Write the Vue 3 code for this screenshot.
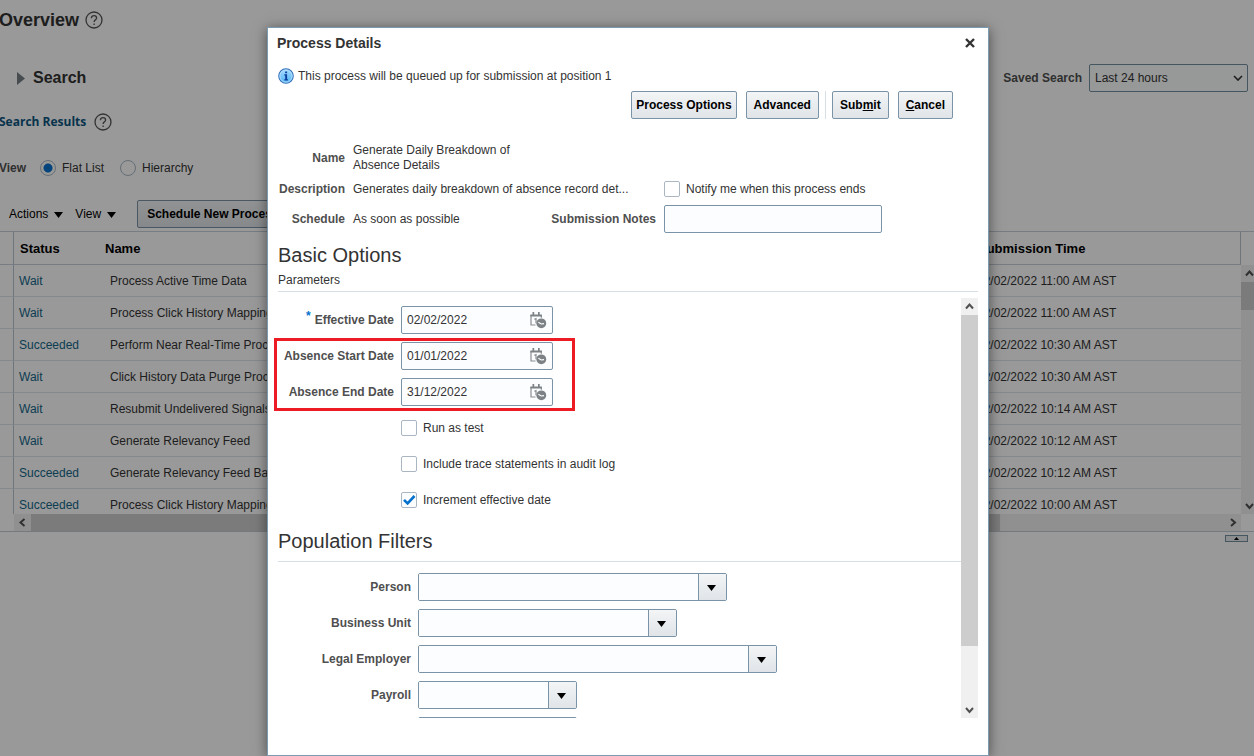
<script setup>
import { ref } from 'vue'

const listMode = ref('flat')
const savedSearch = ref('Last 24 hours')

const rows = [
  { status: 'Wait', name: 'Process Active Time Data', time: '02/02/2022 11:00 AM AST' },
  { status: 'Wait', name: 'Process Click History Mapping', time: '02/02/2022 11:00 AM AST' },
  { status: 'Succeeded', name: 'Perform Near Real-Time Processing', time: '02/02/2022 10:30 AM AST' },
  { status: 'Wait', name: 'Click History Data Purge Process', time: '02/02/2022 10:30 AM AST' },
  { status: 'Wait', name: 'Resubmit Undelivered Signals', time: '02/02/2022 10:14 AM AST' },
  { status: 'Wait', name: 'Generate Relevancy Feed', time: '02/02/2022 10:12 AM AST' },
  { status: 'Succeeded', name: 'Generate Relevancy Feed Batch', time: '02/02/2022 10:12 AM AST' },
  { status: 'Succeeded', name: 'Process Click History Mapping', time: '02/02/2022 10:00 AM AST' },
]

const effectiveDate = ref({ id: 'effective', label: 'Effective Date', value: '02/02/2022' })
const absenceDates = ref([
  { id: 'start', label: 'Absence Start Date', value: '01/01/2022' },
  { id: 'end', label: 'Absence End Date', value: '31/12/2022' },
])
const options = ref([
  { id: 'test', label: 'Run as test', on: false },
  { id: 'trace', label: 'Include trace statements in audit log', on: false },
  { id: 'increment', label: 'Increment effective date', on: true },
])
const filters = ref([
  { id: 'person', label: 'Person', size: 'm', value: '' },
  { id: 'unit', label: 'Business Unit', size: 's', value: '' },
  { id: 'employer', label: 'Legal Employer', size: 'l', value: '' },
  { id: 'payroll', label: 'Payroll', size: 'xs', value: '' },
  { id: 'more', label: '', size: 'xs', value: '' },
])
const notify = ref(false)
const notes = ref('')
</script>

<template>
  <div class="page">
    <main class="overview">
      <header class="page-head">
        <h1>Overview</h1>
        <button class="help" aria-label="Help">
          <svg viewBox="0 0 18 18"><circle cx="9" cy="9" r="8" /><path d="M6.4 7.2C6.4 5.6 7.5 4.6 9 4.6s2.6.9 2.6 2.3c0 1.9-2.5 2-2.5 4.2M9.1 12.6v1.3" /></svg>
        </button>
      </header>

      <div class="search-bar">
        <button class="disclosure" aria-label="Expand Search">
          <svg viewBox="0 0 8 13"><path d="M0 0l8 6.5L0 13z" /></svg>
        </button>
        <h2>Search</h2>
        <label class="saved-label" for="saved">Saved Search</label>
        <span class="select-box">
          <select id="saved" v-model="savedSearch"><option>Last 24 hours</option></select>
          <svg viewBox="0 0 10 6"><path d="M1 1l4 4 4-4" /></svg>
        </span>
      </div>

      <div class="results-head">
        <h3>Search Results</h3>
        <button class="help" aria-label="Help on results">
          <svg viewBox="0 0 18 18"><circle cx="9" cy="9" r="8" /><path d="M6.4 7.2C6.4 5.6 7.5 4.6 9 4.6s2.6.9 2.6 2.3c0 1.9-2.5 2-2.5 4.2M9.1 12.6v1.3" /></svg>
        </button>
      </div>

      <div class="view-row">
        <span class="view-title">View</span>
        <label><input v-model="listMode" type="radio" name="mode" value="flat" />Flat List</label>
        <label><input v-model="listMode" type="radio" name="mode" value="tree" />Hierarchy</label>
      </div>

      <div class="toolbar">
        <button class="menu">Actions<svg viewBox="0 0 9 6"><path d="M0 0h9L4.500 6z" /></svg></button>
        <button class="menu">View<svg viewBox="0 0 9 6"><path d="M0 0h9L4.500 6z" /></svg></button>
        <button class="btn new-process">Schedule New Process</button>
      </div>

      <section class="grid-box">
        <div class="grid-main">
          <div class="grid-clip">
            <table>
              <colgroup><col class="c-gutter" /><col class="c-status" /><col /><col class="c-time" /></colgroup>
              <thead>
                <tr><th></th><th>Status</th><th>Name</th><th>Submission Time</th></tr>
              </thead>
              <tbody>
                <tr v-for="(r, i) in rows" :key="i">
                  <td></td>
                  <td><a href="#">{{ r.status }}</a></td>
                  <td>{{ r.name }}</td>
                  <td>{{ r.time }}</td>
                </tr>
              </tbody>
            </table>
          </div>
          <div class="hbar">
            <svg class="arrow" viewBox="0 0 17 17"><path d="M10.500 5l-4 3.500 4 3.500" /></svg>
            <span class="h-thumb"></span>
            <svg class="arrow" viewBox="0 0 17 17"><path d="M7 5l4 3.500-4 3.500" /></svg>
          </div>
        </div>
        <div class="vbar grid-vbar">
          <svg class="arrow" viewBox="0 0 17 17"><path d="M5 10.500l3.500-4 3.500 4" /></svg>
          <span class="v-thumb"></span>
          <svg class="arrow" viewBox="0 0 17 17"><path d="M5 7l3.500 4L12 7" /></svg>
        </div>
      </section>
      <div class="splitter">
        <button aria-label="Collapse pane"><svg viewBox="0 0 5 3"><path d="M0 3h5L2.500 0z" /></svg></button>
      </div>
    </main>

    <div class="veil">
      <section class="dialog" role="dialog" aria-label="Process Details">
        <header class="dialog-head">
          <h2>Process Details</h2>
          <button class="close" aria-label="Close"><svg viewBox="0 0 10 10"><path d="M1 1l8 8M9 1L1 9" /></svg></button>
        </header>

        <p class="info">
          <svg viewBox="0 0 16 16">
            <defs>
              <linearGradient id="ball" x1="0" y1="0" x2="0" y2="1"><stop offset="0" stop-color="#a8dcff" /><stop offset="1" stop-color="#4fb4f5" /></linearGradient>
            </defs>
            <circle cx="8" cy="8" r="7.200" fill="url(#ball)" stroke="#2f6fb8" stroke-width="1.200" />
            <circle cx="8" cy="8" r="6.200" fill="none" stroke="#c4e6ff" stroke-width="0.800" />
            <path d="M7.200 3.500h1.900v1.800H7.200zM6.300 6.300h2.800v5h.9v1.100H6.300v-1.100h.9V7.400h-.9z" fill="#0b3f9c" />
          </svg>
          This process will be queued up for submission at position 1
        </p>

        <div class="actions">
          <button class="btn wide">Process Options</button>
          <button class="btn">Advanced</button>
          <span class="divider"></span>
          <button class="btn">Sub<u>m</u>it</button>
          <button class="btn"><u>C</u>ancel</button>
        </div>

        <div class="details">
          <span class="lab">Name</span>
          <span class="name-value">Generate Daily Breakdown of Absence Details</span>
          <span class="lab row2">Description</span>
          <span class="desc-value">Generates daily breakdown of absence record det...</span>
          <label class="check"><input v-model="notify" type="checkbox" />Notify me when this process ends</label>
          <span class="lab">Schedule</span>
          <span>As soon as possible</span>
          <label class="lab" for="notes">Submission Notes</label>
          <input id="notes" v-model="notes" class="field" type="text" />
        </div>

        <div class="basic-head">
          <h2 class="section-title">Basic Options</h2>
          <p>Parameters</p>
        </div>

        <div class="scroll-area">
          <div class="scroll-content">
            <div class="params">
              <div class="param-row">
                <label for="effective"><b class="star">*</b>{{ effectiveDate.label }}</label>
                <span class="date-field">
                  <input id="effective" v-model="effectiveDate.value" class="field" type="text" />
                  <button aria-label="Select date">
                    <svg viewBox="0 0 17 17"><path class="line" d="M5.500 13H1V3.500h10.300v2.200" /><path class="bar" d="M.4 2.500h11.500v2H.4zM2.500 0h1.700v3H2.500zM8 0h1.700v3H8z" /><path class="line" d="M4.400 7.400L6 6.600v4.600" /><circle cx="11.300" cy="11.300" r="4.900" /><path class="hand" d="M8.400 10.300l2.800 1.700 2.800-.4" /></svg>
                  </button>
                </span>
              </div>
              <div class="marked">
                <div v-for="d in absenceDates" :key="d.id" class="param-row">
                  <label :for="d.id">{{ d.label }}</label>
                  <span class="date-field">
                    <input :id="d.id" v-model="d.value" class="field" type="text" />
                    <button aria-label="Select date">
                      <svg viewBox="0 0 17 17"><path class="line" d="M5.500 13H1V3.500h10.300v2.200" /><path class="bar" d="M.4 2.500h11.500v2H.4zM2.500 0h1.700v3H2.500zM8 0h1.700v3H8z" /><path class="line" d="M4.400 7.400L6 6.600v4.600" /><circle cx="11.300" cy="11.300" r="4.900" /><path class="hand" d="M8.400 10.300l2.800 1.700 2.800-.4" /></svg>
                    </button>
                  </span>
                </div>
              </div>
              <label v-for="o in options" :key="o.id" class="check option">
                <input v-model="o.on" type="checkbox" />{{ o.label }}
              </label>
            </div>

            <h2 class="section-title population">Population Filters</h2>

            <div class="filters">
              <div v-for="f in filters" :key="f.id" class="filter-row">
                <label :for="f.id">{{ f.label }}</label>
                <span class="combo" :class="f.size">
                  <input :id="f.id" v-model="f.value" type="text" />
                  <button aria-label="Open list"><svg viewBox="0 0 9 6"><path d="M0 0h9L4.500 6z" /></svg></button>
                </span>
              </div>
            </div>
          </div>
          <div class="vbar">
            <svg class="arrow" viewBox="0 0 17 17"><path d="M5 10.500l3.500-4 3.500 4" /></svg>
            <span class="v-thumb"></span>
            <svg class="arrow" viewBox="0 0 17 17"><path d="M5 7l3.500 4L12 7" /></svg>
          </div>
        </div>
      </section>
    </div>
  </div>
</template>

<style>
body {
  margin: 0;
  background: #fff;
}
</style>

<style scoped>
*, *::after {
  box-sizing: border-box;
}
.page {
  position: relative;
  min-height: 100vh;
  overflow: hidden;
  font: 12px/16px "Liberation Sans", Arial, sans-serif;
  color: #333;
}
h1, h2, h3, p {
  margin: 0;
}
button, input, select {
  margin: 0;
  font: inherit;
  color: inherit;
}
button {
  display: inline-flex;
  align-items: center;
  justify-content: center;
  padding: 0;
  border: 0;
  background: none;
}
svg {
  display: block;
  flex: none;
}

.page-head {
  display: flex;
  align-items: center;
  gap: 6px;
  height: 40px;
}
h1 {
  margin-left: -1px;
  font-size: 18px;
  line-height: 24px;
}
.help svg {
  width: 18px;
  height: 18px;
  fill: none;
  stroke: #555;
  stroke-width: 1.3;
}
.search-bar {
  display: flex;
  align-items: center;
  height: 28px;
  margin-top: 24px;
  padding: 0 6px 0 17px;
}
.disclosure svg {
  width: 8px;
  height: 13px;
  fill: #777f86;
}
.search-bar h2 {
  margin-left: 8px;
  font-size: 16px;
}
.saved-label {
  margin-left: auto;
  margin-right: 7px;
  font-weight: bold;
  color: #4f4f4f;
}
.select-box {
  position: relative;
  width: 159px;
}
.select-box select {
  width: 100%;
  height: 28px;
  padding: 0 5px;
  appearance: none;
  border: 1px solid #758fa0;
  border-radius: 2px;
  background: #fcfdfe;
}
.select-box svg {
  position: absolute;
  top: 11px;
  right: 5px;
  width: 10px;
  height: 6px;
  fill: none;
  stroke: #333;
  stroke-width: 1.600;
}
.results-head {
  display: flex;
  align-items: center;
  gap: 8px;
  height: 20px;
  margin-top: 20px;
}
.results-head h3 {
  margin-left: -1px;
  font: bold 12px/16px "Open Sans", "Noto Sans", sans-serif;
  color: #0d567f;
}
.view-row {
  display: flex;
  align-items: center;
  height: 16px;
  margin-top: 28px;
}
.view-title {
  width: 41px;
  margin-left: -1px;
  font-weight: bold;
  color: #4f4f4f;
}
.view-row label {
  display: flex;
  align-items: center;
  gap: 6px;
  margin-right: 16px;
}
.view-row input {
  width: 16px;
  height: 16px;
  appearance: none;
  border: 1px solid #aab7c2;
  border-radius: 50%;
}
.view-row input:checked {
  background: radial-gradient(circle, #0572ce 4px, transparent 5px);
}
.toolbar {
  display: flex;
  align-items: center;
  height: 28px;
  margin-top: 24px;
  padding-left: 9px;
}
.menu {
  gap: 6px;
  margin-right: 12px;
  color: #000;
}
.menu svg {
  width: 9px;
  height: 6px;
  margin-top: 2px;
}
.btn {
  height: 28px;
  padding: 0 7px;
  border: 1px solid #7a93a6;
  border-radius: 2px;
  background: linear-gradient(#f3f5f6, #e0e4e8);
  font-weight: bold;
  color: #000;
}
.new-process {
  margin-left: 9px;
  padding: 0 9px;
}

.grid-box {
  display: flex;
  margin: 3px -4px 0 0;
  border-top: 1px solid #c6d1da;
  border-bottom: 1px solid #c0ccd6;
}
.grid-main {
  flex: 1;
  min-width: 0;
}
.grid-clip {
  height: 282px;
  overflow: hidden;
}
table {
  width: 100%;
  table-layout: fixed;
  border-collapse: separate;
  border-spacing: 0;
}
.c-gutter { width: 14px; }
.c-status { width: 86px; }
.c-time { width: 268px; }
th, td {
  height: 32px;
  padding: 0 5px;
  border-bottom: 1px solid #dfe5ea;
  text-align: left;
  white-space: nowrap;
  overflow: hidden;
}
th {
  height: 33px;
  padding: 2px 5px 0;
  border-color: #c6d1da;
  font-size: 13px;
  color: #000;
}
th:nth-child(2) {
  padding-left: 6px;
}
th:first-child, td:first-child {
  border-right: 1px solid #b8c4cd;
}
th:last-child {
  border-right: 1px solid #b8c4cd;
}
td:nth-child(3) {
  padding: 0 10px;
}
td:nth-child(4) {
  padding: 0 4px;
}
a {
  color: #14678a;
  text-decoration: none;
}
.arrow {
  width: 17px;
  height: 17px;
  fill: none;
  stroke: #505050;
  stroke-width: 2;
}
.hbar {
  display: flex;
  height: 17px;
  margin-left: 14px;
  background: #f0f0f0;
}
.h-thumb {
  width: 79%;
  margin-right: auto;
  background: #cdcdcd;
}
.vbar {
  display: flex;
  flex-direction: column;
  width: 17px;
  flex: none;
  background: #f0f0f0;
}
.v-thumb {
  margin-bottom: auto;
  background: #cdcdcd;
}
.grid-vbar {
  margin: 33px 0 17px;
}
.grid-vbar .v-thumb {
  height: 28px;
}
.splitter {
  display: flex;
  justify-content: flex-end;
  padding: 3px 6px 0 0;
}
.splitter button {
  width: 23px;
  height: 7px;
  border: 1px solid #758fa0;
  background: #e8ecef;
}
.splitter svg {
  width: 5px;
  height: 3px;
}

.veil {
  position: absolute;
  inset: 0;
  display: flex;
  justify-content: center;
  padding: 27px 0 0 2px;
  background: rgba(0, 0, 0, 0.4);
}
.dialog {
  display: flex;
  flex-direction: column;
  width: 722px;
  padding: 0 10px 37px;
  border: 1px solid #7d9bb0;
  background: #fff;
  box-shadow: 0 2px 12px rgba(0, 0, 0, 0.5);
}
.dialog-head {
  display: flex;
  align-items: center;
  justify-content: space-between;
  height: 30px;
  margin: 0 3px 0 -1px;
}
.dialog-head h2 {
  font-size: 14px;
}
.close svg {
  width: 10px;
  height: 10px;
  stroke: #333;
  stroke-width: 2.400;
}
.info {
  display: flex;
  align-items: center;
  gap: 4px;
  height: 20px;
  margin-top: 8px;
}
.info svg {
  width: 16px;
  height: 16px;
}
.actions {
  display: flex;
  justify-content: flex-end;
  gap: 9px;
  margin: 5px 25px 0 0;
}
.actions .wide {
  padding: 0 4px;
}
.divider {
  width: 1px;
  margin: 0 -3px;
  background: #d6dfe6;
}
.details {
  display: grid;
  grid-template-columns: 67px 190px 105px 218px;
  grid-template-rows: 30px 28px 28px;
  gap: 2px 8px;
  align-items: center;
  margin-top: 24px;
}
.lab {
  font-weight: bold;
  text-align: right;
  white-space: nowrap;
  color: #4f4f4f;
}
.name-value {
  line-height: 15px;
}
.row2 {
  grid-column: 1;
}
.desc-value {
  grid-column: span 2;
}
.check {
  display: flex;
  align-items: center;
  gap: 6px;
}
.check input {
  width: 16px;
  height: 16px;
  appearance: none;
  border: 1px solid #aab7c2;
  border-radius: 2px;
  background: #fff;
}
.check input:checked {
  background: #fcfdfe url("data:image/svg+xml,%3Csvg xmlns='http://www.w3.org/2000/svg' viewBox='0 0 14 14'%3E%3Cpath d='M2 6.800l3.600 3.600L12.500 3' fill='none' stroke='%230572ce' stroke-width='2.600'/%3E%3C/svg%3E") center / 14px 14px no-repeat;
}
.field {
  width: 100%;
  height: 28px;
  padding: 0 5px;
  border: 1px solid #7a93a6;
  border-radius: 2px;
  background: #fcfdfe;
}
.basic-head {
  margin-top: 10px;
  padding-bottom: 3px;
  border-bottom: 1px solid #d6dfe6;
}
.section-title {
  font-size: 20px;
  font-weight: normal;
  line-height: 24px;
}
.basic-head p {
  margin-top: 5px;
}
.scroll-area {
  display: flex;
  flex: 1;
  min-height: 0;
  margin-top: 6px;
}
.scroll-area .v-thumb {
  height: 331px;
}
.scroll-content {
  flex: 1;
  height: 420px;
  margin-left: -4px;
  padding: 8px 0 0 4px;
  overflow: hidden;
}
.params, .marked, .filters {
  display: flex;
  flex-direction: column;
  gap: 8px;
}
.marked {
  position: relative;
}
.marked::after {
  content: "";
  position: absolute;
  inset: -4px auto -5px -4px;
  width: 301px;
  border: 3px solid #ed1c24;
  pointer-events: none;
}
.param-row, .filter-row {
  display: flex;
  align-items: center;
  gap: 7px;
}
.param-row label, .filter-row label {
  width: 116px;
  font-weight: bold;
  text-align: right;
  color: #4f4f4f;
}
.filter-row label {
  width: 133px;
}
.star {
  margin-right: 4px;
  vertical-align: 4px;
  line-height: 0;
  color: #0572ce;
}
.date-field {
  position: relative;
  width: 152px;
}
.date-field button {
  position: absolute;
  top: 6px;
  right: 6px;
}
.date-field svg {
  width: 17px;
  height: 17px;
  fill: #7d8286;
}
.date-field .line {
  fill: none;
  stroke: #8a8f93;
  stroke-width: 1.200;
}
.date-field .hand {
  fill: none;
  stroke: #fff;
  stroke-width: 1.200;
}
.option {
  height: 28px;
  margin-left: 123px;
}
.population {
  padding: 15px 0 8px;
  border-bottom: 1px solid #d6dfe6;
}
.filters {
  margin-top: 11px;
}
.combo {
  display: flex;
  height: 28px;
  border: 1px solid #7a93a6;
  border-radius: 2px;
  overflow: hidden;
}
.combo.xs { width: 159px; }
.combo.s { width: 259px; }
.combo.m { width: 309px; }
.combo.l { width: 359px; }
.combo input {
  flex: 1;
  min-width: 0;
  padding: 0 5px;
  border: 0;
  background: #fcfdfe;
}
.combo button {
  width: 28px;
  padding-right: 2px;
  border-left: 1px solid #7a93a6;
  background: linear-gradient(#f3f5f6, #e0e4e8);
}
.combo svg {
  width: 9px;
  height: 6px;
  margin-top: 2px;
  fill: #000;
}
</style>
